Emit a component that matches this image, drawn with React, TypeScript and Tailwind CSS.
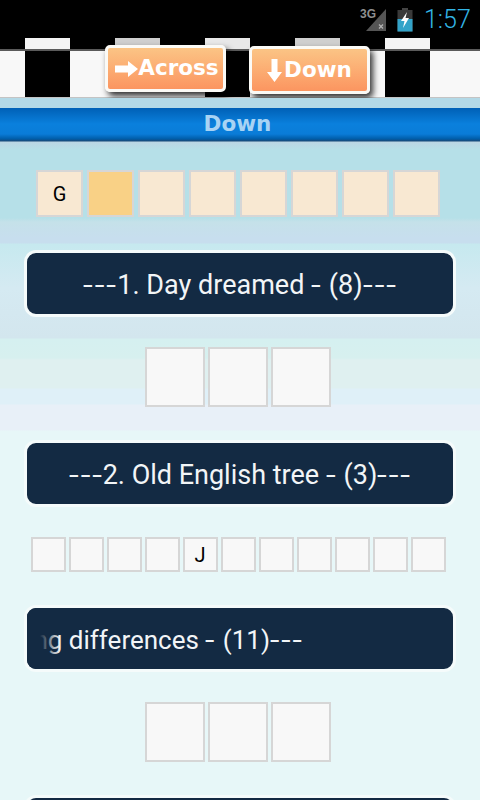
import React from 'react';

const topCells = ['bg-[#f4f4f4]', 'bg-black', 'bg-[#cfcfcf]', 'bg-black', 'bg-[#e8e8e8]', 'bg-black', 'bg-[#cfcfcf]', 'bg-black', 'bg-[#f4f4f4]', 'bg-black'];
const lowCells = ['bg-black', 'bg-[#f8f8f8]', 'bg-[#f8f8f8]', 'bg-[#f8f8f8]', 'bg-black', 'bg-[#f8f8f8]', 'bg-[#f8f8f8]', 'bg-[#f8f8f8]', 'bg-black', 'bg-[#f8f8f8]'];

const StatusBar = () => (
    <div className="h-[38px] bg-black flex items-center justify-end pr-[10px] shrink-0">
        <div className="relative w-[27px] h-[24px] mr-[10px] mt-[2px]">
            <svg width="27" height="24" viewBox="0 0 27 24" className="block">
                <path d="M6 23 L26 1 V23 Z" fill="#555" />
                <path d="M19 16.5 L23 20.5 M23 16.5 L19 20.5" stroke="#b5b5b5" strokeWidth="1.2" />
            </svg>
            <span className="absolute left-0 top-0 text-[12px] leading-[12px] font-bold text-[#8f8f8f] font-['Liberation_Sans',sans-serif]">3G</span>
        </div>
        <svg width="16" height="24" viewBox="0 0 16 24" className="mr-[11px] mt-[2px]">
            <rect x="5" y="0" width="6" height="3" fill="#444" />
            <rect x="0.5" y="2" width="15" height="21.5" fill="#3a3a3a" />
            <rect x="0.5" y="11" width="15" height="12.5" fill="#33a3c9" />
            <path d="M10 4 L4 13 H7.5 L6 20 L12 10 H8.5 Z" fill="#fff" />
        </svg>
        <span className="text-[25px] leading-none text-[#33b5e5] font-['Roboto',sans-serif] font-light w-[46px]">1:57</span>
    </div>
);

const Strip = () => (
    <div className="relative h-[60px] shrink-0 overflow-hidden bg-[#f8f8f8]">
        <div className="flex h-[11px] bg-black pl-[25px]">
            {topCells.map((c, i) => <div key={i} className={`w-[45px] shrink-0 ${c}`} />)}
        </div>
        <div className="h-[2px] bg-[#5a5a5a]" />
        <div className="flex h-[46px] pl-[25px]">
            {lowCells.map((c, i) => <div key={i} className={`w-[45px] shrink-0 ${c}`} />)}
        </div>
        <div className="h-[1px] bg-[#c4c4c4]" />
        <button className="absolute left-[105px] top-[7px] w-[121px] h-[47px] rounded-[5px] border-[3px] border-[#fbfaf6] bg-gradient-to-b from-[#fbc485] to-[#fb9560] shadow-[3px_4px_6px_rgba(0,0,0,0.8)] flex items-center justify-center pl-[3px] text-white font-bold text-[21.5px] font-['DejaVu_Sans',sans-serif]">
            <svg width="23" height="16" viewBox="0 0 23 16" className="shrink-0">
                <path d="M0 4.5 H13 V0 L23 8 L13 16 V11.5 H0 Z" fill="#fff" />
            </svg>
            <span>Across</span>
        </button>
        <button className="absolute left-[249px] top-[8px] w-[121px] h-[48px] rounded-[5px] border-[3px] border-[#fbfaf6] bg-gradient-to-b from-[#fbc485] to-[#fb9560] shadow-[3px_4px_6px_rgba(0,0,0,0.8)] flex items-center justify-center text-white font-bold text-[21.5px] font-['DejaVu_Sans',sans-serif]">
            <svg width="15" height="23" viewBox="0 0 15 23" className="shrink-0 mr-[2px]">
                <path d="M4.5 0 H10.5 V13 H15 L7.5 23 L0 13 H4.5 Z" fill="#fff" />
            </svg>
            <span>Down</span>
        </button>
    </div>
);

const Cell = ({ size, letter, active, cream }: { size: 'lg' | 'md' | 'sm'; letter?: string; active?: boolean; cream?: boolean }) => {
    const dim = size === 'lg' ? 'w-[60px] h-[60px]' : size === 'md' ? 'w-[47px] h-[47px]' : 'w-[35px] h-[35px]';
    const fill = active ? 'bg-[#f9d186]' : cream ? 'bg-[#f8e8d2]' : 'bg-[#f8f8f8]';
    return (
        <div className={`${dim} ${fill} border-2 border-[#d6d6d6] flex items-center justify-center text-[20px] text-black font-['Roboto',sans-serif]`}>
            <span className={size === 'sm' ? '-ml-[1px]' : ''}>{letter}</span>
        </div>
    );
};

const Dashes = ({ n = 3 }: { n?: number }) => (
    <span className={`inline-block origin-left scale-x-[1.3] tracking-[1.5px] ${n === 3 ? 'w-[34px]' : 'w-[11px]'}`}>{'-'.repeat(n)}</span>
);

const Clue = ({ before, after }: { before: string; after: string }) => (
    <div className="mx-[24px] h-[67px] rounded-[12px] border-[3px] border-[#f5fbfb] bg-[#132a43] flex items-center justify-center pt-[4px] text-[27px] text-[#f2f5f7] font-['Roboto',sans-serif] whitespace-pre">
        <Dashes />
        <span>{before} </span>
        <Dashes n={1} />
        <span> {after}</span>
        <Dashes />
    </div>
);

const App: React.FC = () => {
    return (
        <div className="w-[480px] h-[800px] overflow-hidden flex flex-col bg-[#e7f7f8] font-['Roboto',sans-serif]">
            <StatusBar />
            <Strip />

            <div className="bg-[linear-gradient(to_bottom,#b3d9e7_0px,#b3d9e7_10px,#0060b6_10px,#0a80dd_26px,#0a7cd8_36px,#005ca8_41px,#1a4a78_43px,#bcd6e4_44px,#b6e0e8_52px,#b6e0e8_120px,#c5e1e9_124px,#c7deee_140px,#c7deee_145px,#c6e9ef_146px,#d5eaf2_190px,#d3e6ee_240px,#d5f0f0_241px,#d7f0ef_260px,#dff0f0_262px,#dff0f0_290px,#dff0f8_291px,#dff0f8_306px,#e8f0f8_307px,#e8f0f8_332px,#e7f7f8_333px)]">
                <div className="h-[10px]" />
                <div className="h-[32px] flex items-center justify-center pr-[5px] text-[21.5px] leading-none font-bold text-[#a8d3f4] font-['DejaVu_Sans',sans-serif]">
                    Down
                </div>
                <div className="flex justify-center gap-[4px] pt-[30px] pr-[4px] h-[110px]">
                    <Cell size="md" cream letter="G" />
                    <Cell size="md" active />
                    {[0, 1, 2, 3, 4, 5].map(i => <Cell key={i} size="md" cream />)}
                </div>
                <Clue before="1. Day dreamed" after="(8)" />
                <div className="flex justify-center gap-[3px] pt-[30px] pr-[4px] h-[123px]">
                    {[0, 1, 2].map(i => <Cell key={i} size="lg" />)}
                </div>
                <Clue before="2. Old English tree" after="(3)" />
                <div className="flex justify-center gap-[3px] pt-[30px] pr-[3px] h-[98px]">
                    {[...Array(11).keys()].map(i => <Cell key={i} size="sm" letter={i === 4 ? 'J' : undefined} />)}
                </div>
                <div className="relative mx-[24px] h-[67px] rounded-[12px] border-[3px] border-[#f5fbfb] bg-[#132a43] flex items-center justify-end pr-[149px] pt-[4px] text-[26px] text-[#f2f5f7] whitespace-pre overflow-hidden">
                    <span>ng differences </span>
                    <Dashes n={1} />
                    <span> (11)</span>
                    <Dashes />
                    <div className="absolute left-0 top-0 h-full w-[13px] bg-[#132a43]" />
                    <div className="absolute left-[13px] top-0 h-full w-[20px] bg-gradient-to-r from-[#132a43] to-transparent" />
                </div>
                <div className="flex justify-center gap-[3px] pt-[30px] pr-[4px] h-[123px]">
                    {[0, 1, 2].map(i => <Cell key={i} size="lg" />)}
                </div>
                <div className="mx-[24px] h-[67px] rounded-[12px] border-[3px] border-[#f5fbfb] bg-[#132a43]" />
            </div>
        </div>
    );
};

export default App;
